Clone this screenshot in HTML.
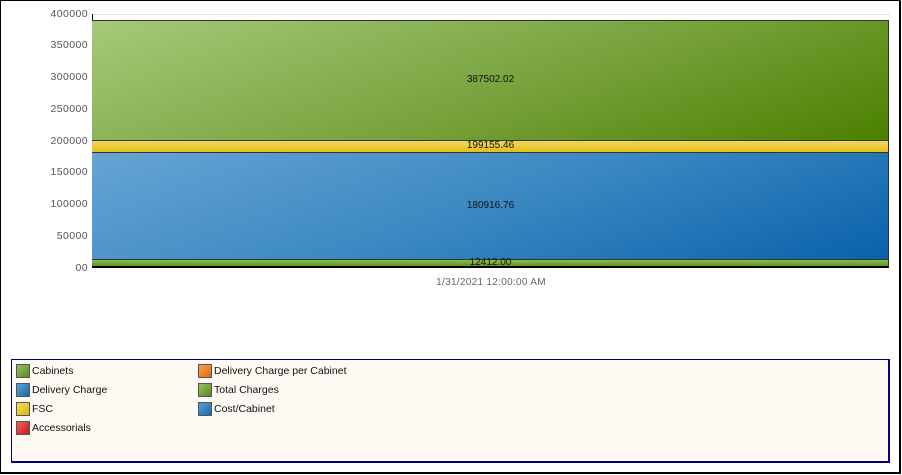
<!DOCTYPE html>
<html><head><style>
body{margin:0;width:902px;height:475px;background:#fff;position:relative;overflow:hidden;font-family:"Liberation Sans",sans-serif}
.o{position:absolute;left:0;top:0;width:898px;height:471px;border:1px solid #000;border-width:1px 2px 2px 1px}
.yl{position:absolute;right:814px;font-size:10.5px;color:#555;letter-spacing:0.4px}
.g{position:absolute;left:92px;width:798px;height:1px;background:#e4e4e4}
.b{position:absolute;left:92px;width:797px;border:1px solid #333;border-left:none;box-sizing:border-box}
.v{position:absolute;left:92px;width:797px;text-align:center;font-size:10px;color:#111}
.lg{position:absolute;left:11px;top:359px;width:876px;height:101px;border:2px solid #000080;border-width:1px 2px 2px 1px;background:#fefaf3}
.it{position:absolute;font-size:10.5px;color:#111;padding-left:16px;line-height:14px}
.it i{position:absolute;left:0;top:0;width:12px;height:12px;border:1px solid #555}
</style></head><body>
<div class="o"></div>
<div class="g" style="top:14px"></div>
<div class="yl" style="top:8px">400000</div>
<div class="yl" style="top:39px">350000</div>
<div class="yl" style="top:71px">300000</div>
<div class="yl" style="top:103px">250000</div>
<div class="yl" style="top:135px">200000</div>
<div class="yl" style="top:166px">150000</div>
<div class="yl" style="top:198px">100000</div>
<div class="yl" style="top:230px">50000</div>
<div class="yl" style="top:262px">00</div>
<div style="position:absolute;left:92px;top:14px;width:1px;height:254px;background:#000"></div>
<div class="b" style="top:20px;height:121px;background:linear-gradient(160deg,#a6c97a,#78a23c 55%,#4b8000)"></div>
<div class="b" style="top:140px;height:13px;background:linear-gradient(#f2d85a,#e2be1a)"></div>
<div class="b" style="top:152px;height:108px;background:linear-gradient(160deg,#66a4d4,#3b88c2 50%,#0a62aa)"></div>
<div class="b" style="top:259px;height:9px;background:linear-gradient(#8cbc4e,#5d9524);border-bottom:2px solid #000"></div>
<div class="v" style="top:74px">387502.02</div>
<div class="v" style="top:140px">199155.46</div>
<div class="v" style="top:200px">180916.76</div>
<div class="v" style="top:257px">12412.00</div>
<div style="position:absolute;left:92px;width:798px;top:277px;text-align:center;font-size:10px;color:#666;letter-spacing:0.3px">1/31/2021 12:00:00 AM</div>
<div class="lg"></div>
<div class="it" style="left:16px;top:364px"><i style="background:linear-gradient(135deg,#9ac060,#5a8a20)"></i>Cabinets</div>
<div class="it" style="left:16px;top:383px"><i style="background:linear-gradient(135deg,#5aa0d6,#1c6aa8)"></i>Delivery Charge</div>
<div class="it" style="left:16px;top:402px"><i style="background:linear-gradient(135deg,#f4dc5a,#dcb418)"></i>FSC</div>
<div class="it" style="left:16px;top:421px"><i style="background:linear-gradient(135deg,#f06060,#c81a1a)"></i>Accessorials</div>
<div class="it" style="left:198px;top:364px"><i style="background:linear-gradient(135deg,#fba050,#e06a10)"></i>Delivery Charge per Cabinet</div>
<div class="it" style="left:198px;top:383px"><i style="background:linear-gradient(135deg,#9ac060,#5a8a20)"></i>Total Charges</div>
<div class="it" style="left:198px;top:402px"><i style="background:linear-gradient(135deg,#5aa0d6,#1c6aa8)"></i>Cost/Cabinet</div>
</body></html>
